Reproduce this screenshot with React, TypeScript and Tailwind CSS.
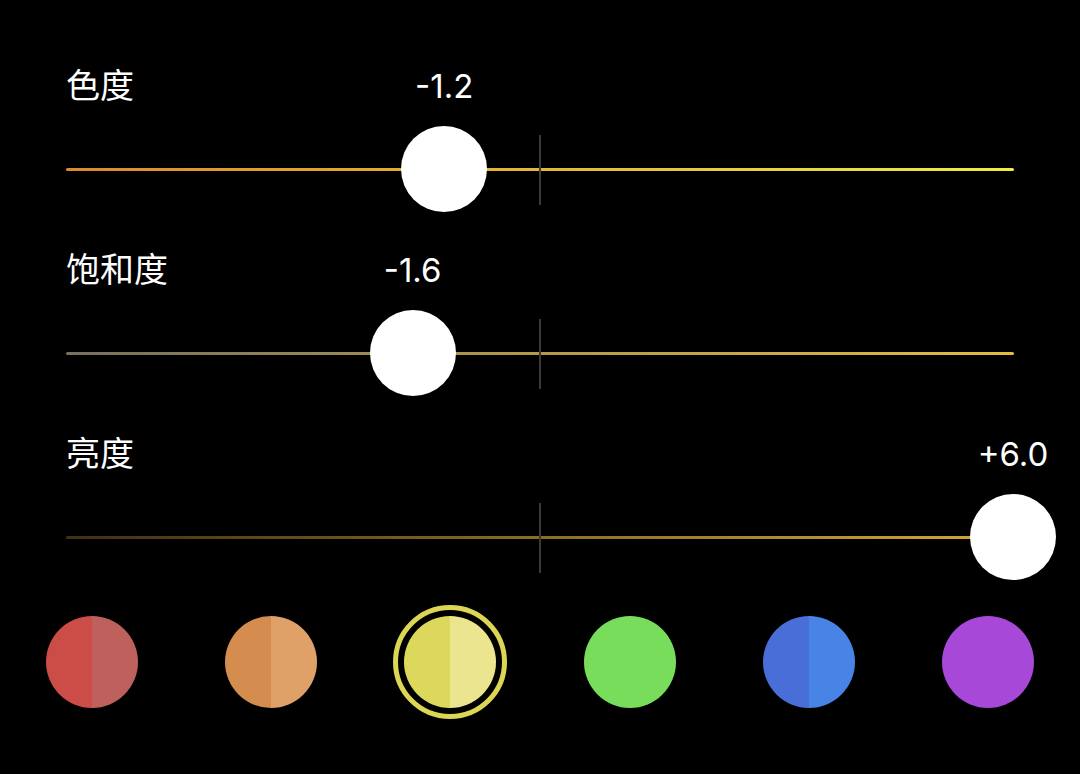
import React from 'react';

type SliderProps = {
  label: string;
  value: number;
  track: string;
};

const MIN = -6;
const MAX = 6;

function formatValue(v: number) {
  const s = v.toFixed(1);
  return v > 0 ? `+${s}` : s;
}

function Slider({ label, value, track }: SliderProps) {
  const pct = ((value - MIN) / (MAX - MIN)) * 100;

  return (
    <div className="flex h-[184px] flex-col">
      {/* label + value */}
      <div className="relative flex h-[40px] items-center">
        <span className="text-[34px] leading-none text-white">{label}</span>
        <span
          className="absolute top-1/2 -translate-x-1/2 -translate-y-1/2 text-[33px] leading-none text-white"
          style={{ left: `calc(${pct}% - 1px)` }}
        >
          {formatValue(value)}
        </span>
      </div>

      {/* track */}
      <div className="relative mt-[20px] flex h-[86px] items-center">
        <div className={`h-[3px] w-full rounded-full ${track}`} />
        <div className="absolute left-1/2 top-[9px] h-[70px] w-[2px] -translate-x-1/2 bg-[#3a3a3a]" />
        <div
          className="absolute top-0 h-[86px] w-[86px] -translate-x-1/2 rounded-full bg-white"
          style={{ left: `calc(${pct}% - 1px)` }}
        />
      </div>
    </div>
  );
}

const swatches = [
  { left: '#cc4c48', right: '#be605b' },
  { left: '#d48d4e', right: '#e0a169' },
  { left: '#dcd85b', right: '#ebe58f', selected: true },
  { left: '#77dd5a', right: '#77dd5a' },
  { left: '#4a6ed8', right: '#4883e6' },
  { left: '#a848d8', right: '#a848d8' },
];

export default function App() {
  return (
    <div
      className="flex h-[774px] w-[1080px] flex-col bg-black"
      style={{ fontFamily: 'Inter, "Noto Sans CJK SC", sans-serif' }}
    >
      <div className="flex flex-col px-[66px] pt-[66px]">
        <Slider
          label="色度"
          value={-1.2}
          track="bg-gradient-to-r from-[#dc8a2a] via-[#e2b83a] to-[#eeee44]"
        />
        <Slider
          label="饱和度"
          value={-1.6}
          track="bg-gradient-to-r from-[#75705e] via-[#b49a48] to-[#e2bc42]"
        />
        <Slider
          label="亮度"
          value={6}
          track="bg-gradient-to-r from-[#3e3012] via-[#8c6e22] to-[#d6a834]"
        />
      </div>

      <div className="mt-[-14px] flex items-center justify-between px-[34px]">
        {swatches.map((s, i) => (
          <div key={i} className="flex h-[116px] w-[116px] items-center justify-center">
            <div
              className={
                s.selected
                  ? 'flex h-[114px] w-[114px] items-center justify-center rounded-full border-[5px] border-[#dcd654]'
                  : 'flex h-[92px] w-[92px] items-center justify-center'
              }
            >
              <div className="flex h-[92px] w-[92px] overflow-hidden rounded-full">
                <div className="h-full w-1/2" style={{ backgroundColor: s.left }} />
                <div className="h-full w-1/2" style={{ backgroundColor: s.right }} />
              </div>
            </div>
          </div>
        ))}
      </div>
    </div>
  );
}
